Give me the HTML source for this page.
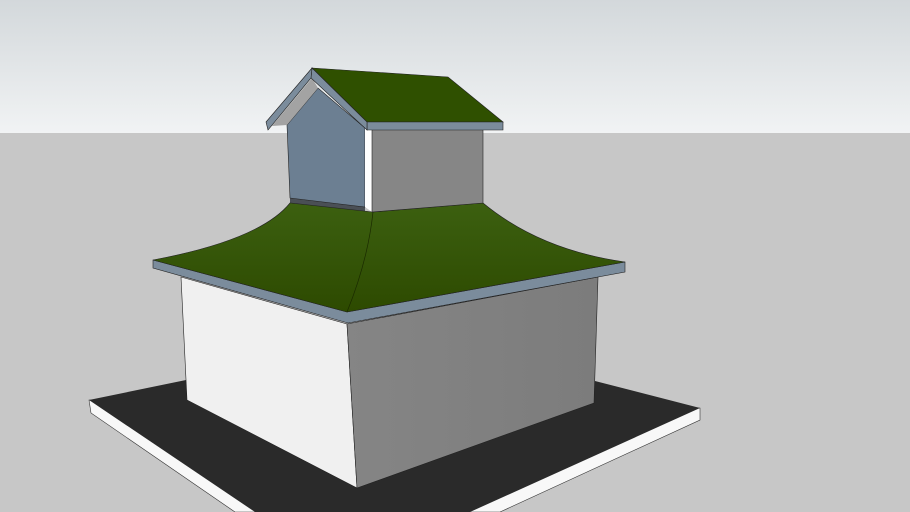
<!DOCTYPE html>
<html><head><style>html,body{margin:0;padding:0;width:910px;height:512px;overflow:hidden}</style></head><body>
<svg width="910" height="512" viewBox="0 0 910 512" xmlns="http://www.w3.org/2000/svg">
<defs>
<linearGradient id="sky" x1="0" y1="0" x2="0" y2="1"><stop offset="0" stop-color="#d3d8db"/><stop offset="1" stop-color="#f1f3f4"/></linearGradient>
<linearGradient id="rf" x1="0" y1="0" x2="1" y2="0"><stop offset="0" stop-color="#858585"/><stop offset="1" stop-color="#7c7c7c"/></linearGradient>
<linearGradient id="gr" x1="0" y1="0" x2="0" y2="1"><stop offset="0" stop-color="#3c6010"/><stop offset="1" stop-color="#2d4a00"/></linearGradient>
</defs>
<rect x="0" y="0" width="910" height="133" fill="url(#sky)"/>
<rect x="0" y="133" width="910" height="379" fill="#c7c7c7"/>
<!-- slab -->
<polygon points="89,400 91,413 235,512 500,512 700,420 700,408" fill="#f8f8f8" stroke="#333" stroke-width="0.6"/>
<polygon points="89,400 186,380 595,381 700,408 470,512 255,512" fill="#2a2a2a"/>
<!-- walls -->
<polygon points="181,277 347,324 357,488 187,400" fill="#f0f0f0" stroke="#222" stroke-width="0.6"/>
<polygon points="347,324 598,277 594,403 357,488" fill="url(#rf)" stroke="#222" stroke-width="0.6"/>
<!-- lower roof fascia -->
<polygon points="153,260 153,268 348,323 625,272 625,262 347,312" fill="#7b8c9c" stroke="#222" stroke-width="0.6"/>
<!-- cupola base -->
<polygon points="290,198 365,207 365,212 290,203" fill="#4a4f55"/>
<!-- lower roof -->
<path d="M153,260 Q260,240 290,203 L373,212 L483,203 Q540,250 625,262 L347,312 Z" fill="url(#gr)" stroke="#222" stroke-width="0.6"/>
<path d="M347,312 Q368,260 373,212" fill="none" stroke="#1a2a00" stroke-width="0.7"/>
<!-- cupola walls -->
<polygon points="287,125 318,88 365,128 365,207 290,198" fill="#6c7f92" stroke="#222" stroke-width="0.6"/>
<polygon points="365,128 372,128 372,212 365,207" fill="#ffffff"/>
<polygon points="372,128 483,128 483,203 372,212" fill="#868686" stroke="#222" stroke-width="0.6"/>
<!-- barge underside -->
<polygon points="272,126 312,78 318,88 287,125" fill="#a3a3a3"/>
<!-- gable roof -->
<polygon points="312,68 448,77 503,122 367,122" fill="#2f5000" stroke="#222" stroke-width="0.6"/>
<polygon points="367,122 503,122 503,130 367,130" fill="#7b8c9c" stroke="#222" stroke-width="0.6"/>
<polygon points="312,68 367,122 367,130 311,78" fill="#7b8c9c" stroke="#222" stroke-width="0.6"/>
<polygon points="312,68 266,122 268,130 311,78" fill="#7b8c9c" stroke="#222" stroke-width="0.6"/>
</svg>
</body></html>
